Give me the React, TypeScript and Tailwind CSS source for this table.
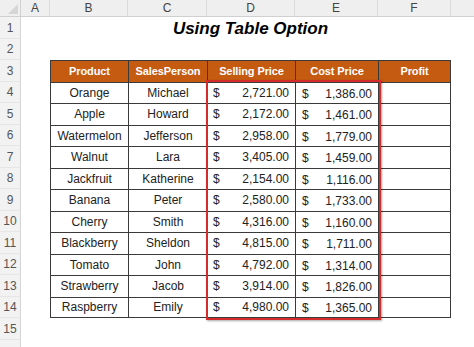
import React from "react";

const cols = [
  { l: "A", w: 29 },
  { l: "B", w: 78 },
  { l: "C", w: 79 },
  { l: "D", w: 88 },
  { l: "E", w: 83 },
  { l: "F", w: 73 },
  { l: "", w: 60 },
];

const data: [string, string, string, string][] = [
  ["Orange", "Michael", "2,721.00", "1,386.00"],
  ["Apple", "Howard", "2,172.00", "1,461.00"],
  ["Watermelon", "Jefferson", "2,958.00", "1,779.00"],
  ["Walnut", "Lara", "3,405.00", "1,459.00"],
  ["Jackfruit", "Katherine", "2,154.00", "1,116.00"],
  ["Banana", "Peter", "2,580.00", "1,733.00"],
  ["Cherry", "Smith", "4,316.00", "1,160.00"],
  ["Blackberry", "Sheldon", "4,815.00", "1,711.00"],
  ["Tomato", "John", "4,792.00", "1,314.00"],
  ["Strawberry", "Jacob", "3,914.00", "1,826.00"],
  ["Raspberry", "Emily", "4,980.00", "1,365.00"],
];

const font = { fontFamily: '"Liberation Sans", Arial, sans-serif' };

function RowNum({ n }: { n?: number }) {
  return (
    <div className="w-[21px] shrink-0 h-full flex items-center justify-center bg-[#f2f2f2] border-r border-[#d4d4d4] border-b border-b-[#e6e6e6] text-[12px] text-[#555] pt-[1px]">
      {n}
    </div>
  );
}

export default function App() {
  const rowH = "h-[21.5px]";
  return (
    <div className="relative w-[474px] h-[347px] overflow-hidden bg-white text-[#222]" style={font}>
      {/* column header */}
      <div className="flex h-[17px] bg-[#efefef] border-b border-[#d0d0d0]">
        <div className="w-[21px] shrink-0 h-full border-r border-[#d0d0d0] relative">
          <svg className="absolute right-[2px] bottom-[2px]" width="10" height="10" viewBox="0 0 10 10">
            <polygon points="10,0 10,10 0,10" fill="#d6d6d6" />
          </svg>
        </div>
        {cols.map((c, i) => (
          <div
            key={i}
            style={{ width: c.w }}
            className="shrink-0 h-full flex items-center justify-center border-r border-[#dadada] text-[12px] text-[#444]"
          >
            {c.l}
          </div>
        ))}
      </div>

      {/* row 1 */}
      <div className={`flex ${rowH}`}>
        <RowNum n={1} />
        <div className="w-[29px] shrink-0" />
        <div className="w-[401px] shrink-0 flex items-center justify-center text-[17px] font-bold italic text-black pt-[1px]">
          Using Table Option
        </div>
      </div>
      {/* row 2 */}
      <div className={`flex ${rowH}`}>
        <RowNum n={2} />
      </div>
      {/* row 3 header */}
      <div className={`flex ${rowH}`}>
        <RowNum n={3} />
        <div className="w-[29px] shrink-0" />
        {["Product", "SalesPerson", "Selling Price", "Cost Price", "Profit"].map((h, i) => (
          <div
            key={h}
            style={{ width: cols[i + 1].w }}
            className={`shrink-0 h-full flex items-center justify-center bg-[#c55a11] text-white font-bold text-[11px] tracking-[-0.1px] border-t border-l border-[#3a3a3a] ${i === 4 ? "border-r" : ""}`}
          >
            {h}
          </div>
        ))}
      </div>
      {data.map((r, idx) => {
        const last = idx === data.length - 1;
        const cell = `shrink-0 h-full border-t border-l border-[#3a3a3a] text-[12px] ${last ? "border-b" : ""}`;
        return (
          <div key={idx} className={`flex ${rowH}`}>
            <RowNum n={idx + 4} />
            <div className="w-[29px] shrink-0" />
            <div style={{ width: 78 }} className={`${cell} flex items-center justify-center`}>{r[0]}</div>
            <div style={{ width: 79 }} className={`${cell} flex items-center justify-center`}>{r[1]}</div>
            <div style={{ width: 88 }} className={`${cell} flex items-center justify-between pl-[5px] pr-[6px]`}>
              <span>$</span>
              <span>{r[2]}</span>
            </div>
            <div style={{ width: 83 }} className={`${cell} flex items-center justify-between pl-[6px] pr-[6px] pt-[2px]`}>
              <span>$</span>
              <span>{r[3]}</span>
            </div>
            <div style={{ width: 73 }} className={`${cell} border-r`} />
          </div>
        );
      })}
      <div className={`flex ${rowH}`}>
        <RowNum n={15} />
      </div>
      <div className={`flex ${rowH}`}>
        <RowNum />
      </div>

      {/* red selection box */}
      <div className="absolute left-[206px] top-[80px] w-[175px] h-[240px] border-2 border-[#d42b2b] shadow-[1px_1px_2px_rgba(0,0,0,0.35)] pointer-events-none" />
    </div>
  );
}
